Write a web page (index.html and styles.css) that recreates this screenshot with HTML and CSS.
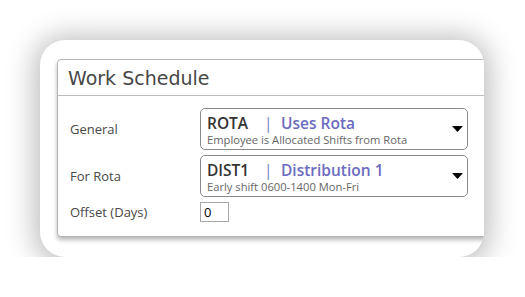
FILE: index.html
```html
<!DOCTYPE html>
<html>
<head>
<meta charset="utf-8">
<link rel="stylesheet" href="styles.css">
</head>
<body>
<div class="card">
  <div class="panel">
    <div class="panel-head">Work Schedule</div>
    <div class="panel-body">
      <div class="label">General</div>
      <div class="select">
        <div class="sel-text">
          <div class="sel-main"><span class="code">ROTA</span><span class="pipe">|</span><span class="name">Uses Rota</span></div>
          <div class="sel-sub">Employee is Allocated Shifts from Rota</div>
        </div>
        <svg class="caret" width="11" height="6" viewBox="0 0 11 6"><path d="M0 0H11L5.5 6Z" fill="#000"/></svg>
      </div>
      <div class="label">For Rota</div>
      <div class="select">
        <div class="sel-text">
          <div class="sel-main"><span class="code">DIST1</span><span class="pipe">|</span><span class="name">Distribution 1</span></div>
          <div class="sel-sub">Early shift 0600-1400 Mon-Fri</div>
        </div>
        <svg class="caret" width="11" height="6" viewBox="0 0 11 6"><path d="M0 0H11L5.5 6Z" fill="#000"/></svg>
      </div>
      <div class="label">Offset (Days)</div>
      <div class="field"><div class="input">0</div></div>
    </div>
  </div>
</div>
</body>
</html>
```
FILE: styles.css
```css
html, body {
  margin: 0;
  padding: 0;
  background: #fff;
}
body {
  padding: 40px 0 0 40px;
  font-family: "Open Sans", "Liberation Sans", sans-serif;
}
.card {
  width: 444px;
  height: 217px;
  background: #fff;
  border-radius: 25px;
  box-shadow: 0 2px 28px 6px rgba(0,0,0,0.26);
  overflow: hidden;
  padding: 19px 0 0 17px;
  box-sizing: border-box;
}
.panel {
  width: 460px;
  border: 1px solid #b4b4b4;
  border-radius: 4px 0 0 4px;
  background: #fff;
  box-shadow: 0 3px 4px rgba(0,0,0,0.28);
}
.panel-head {
  height: 36px;
  box-sizing: border-box;
  border-bottom: 1px solid #bcbcbc;
  padding: 5px 0 0 10px;
  font-family: "DejaVu Sans", sans-serif;
  font-size: 19px;
  color: #474747;
  line-height: 26px;
}
.panel-body {
  display: grid;
  grid-template-columns: 130px 268px;
  row-gap: 5px;
  align-items: center;
  padding: 12px 0 14px 12px;
}
.label {
  font-size: 13px;
  color: #474747;
}
.select {
  height: 42px;
  box-sizing: border-box;
  border: 1px solid #8a8a8a;
  border-radius: 5px;
  display: flex;
  align-items: center;
  justify-content: space-between;
  padding: 0 4px 0 6px;
}
.sel-main {
  display: flex;
  align-items: baseline;
  font-size: 15.5px;
  font-weight: 600;
  line-height: 20px;
  margin-top: 1px;
}
.code {
  color: #333;
  width: 57px;
}
.pipe {
  font-weight: 400;
  color: #6f86c4;
  width: 17px;
}
.name {
  color: #6b6bbf;
}
.sel-sub {
  font-size: 11.2px;
  color: #666;
  line-height: 14px;
}
.caret {
  display: block;
}
.field {
  display: flex;
}
.input {
  width: 29px;
  height: 20px;
  box-sizing: border-box;
  border: 1px solid #a8a8a8;
  font-size: 13px;
  color: #000;
  padding-left: 3px;
  line-height: 18px;
}
```
